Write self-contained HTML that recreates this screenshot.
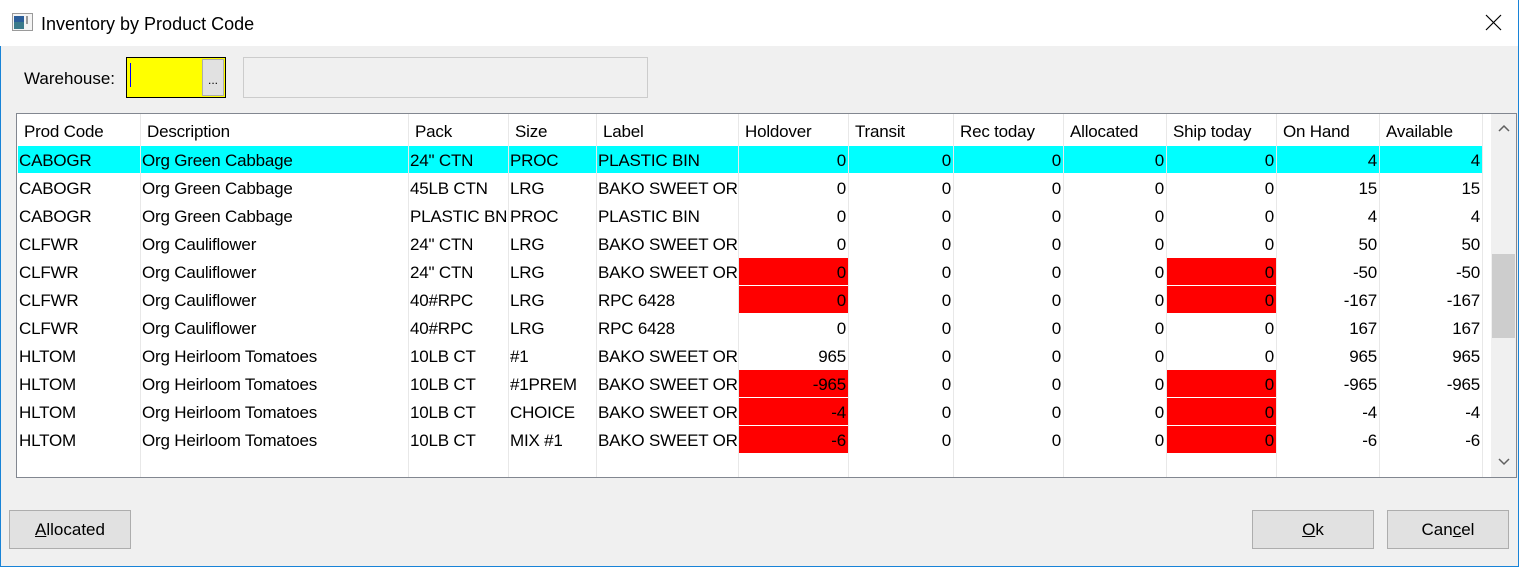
<!DOCTYPE html>
<html><head><meta charset="utf-8"><style>
*{box-sizing:border-box;margin:0;padding:0}
body{width:1519px;height:567px;overflow:hidden;font-family:"Liberation Sans",sans-serif;font-size:17px;color:#000;background:#f0f0f0;position:relative}
.win{position:absolute;left:0;top:0;width:1519px;height:567px;border:1px solid #1883d7;background:#f0f0f0}
.title{position:absolute;left:-1px;top:-1px;width:1518px;height:46px;background:#fff}
.title .t{position:absolute;left:41px;top:14px;font-size:18px}
.lbl{position:absolute;left:23px;top:68px;font-size:17px}
.wh{position:absolute;left:125px;top:56px;width:100px;height:41px;border:1px solid #000;background:#ff0}
.wh .btn{position:absolute;right:1px;top:1px;width:22px;height:37px;background:#e1e1e1;border:1px solid #adadad;font-size:12px;text-align:center;line-height:40px}
.wh .cur{position:absolute;left:3px;top:5px;width:1px;height:24px;background:#00f}
.box2{position:absolute;left:242px;top:56px;width:405px;height:41px;border:1px solid #ccc;background:#f0f0f0}
.grid{position:absolute;left:15px;top:112px;width:1501px;height:365px;border:1px solid #828790;background:#fff;overflow:hidden;letter-spacing:-0.2px}
.row{position:absolute;left:1px;height:28px}
.c{position:absolute;top:0;height:28px;border-right:1px solid #e8e8e8;white-space:nowrap;overflow:hidden;line-height:29px;padding-left:1px}
.n{text-align:right;padding-right:2px;padding-left:0}
.bg{position:absolute;left:0;top:0;right:0;height:27px}
.hd .c{height:32px;line-height:36px;padding-left:6px}
.sb{position:absolute;left:1474px;top:0;width:25px;height:363px;background:#f0f0f0}
.thumb{position:absolute;left:1px;top:140px;width:23px;height:84px;background:#cdcdcd}
.b{position:absolute;top:509px;height:39px;background:#e1e1e1;border:1px solid #adadad;text-align:center;line-height:38px;font-size:17px}
</style></head><body><div class="win">
<div class="title">
<svg style="position:absolute;left:12px;top:13px" width="21" height="19"><rect x="0.5" y="0.5" width="20" height="17" fill="#f4f4f4" stroke="#9a9a9a"/><rect x="2" y="3" width="10" height="13" fill="#3a7a8a"/><rect x="2" y="3" width="10" height="6" fill="#2b5e9a"/><rect x="14" y="3" width="2" height="8" fill="#999"/></svg>
<div class="t">Inventory by Product Code</div>
<svg style="position:absolute;left:1485px;top:14px" width="17" height="17"><path d="M1 1L16 16M16 1L1 16" stroke="#000" stroke-width="1.2"/></svg>
</div>
<div class="lbl">Warehouse:</div>
<div class="wh"><div class="cur"></div><div class="btn">...</div></div>
<div class="box2"></div>
<div class="grid">
<div class="row hd" style="top:0">
<div class="c" style="left:0;width:123px">Prod Code</div><div class="c" style="left:123px;width:268px">Description</div><div class="c" style="left:391px;width:100px">Pack</div><div class="c" style="left:491px;width:88px">Size</div><div class="c" style="left:579px;width:142px">Label</div><div class="c" style="left:721px;width:110px">Holdover</div><div class="c" style="left:831px;width:105px">Transit</div><div class="c" style="left:936px;width:110px">Rec today</div><div class="c" style="left:1046px;width:103px">Allocated</div><div class="c" style="left:1149px;width:110px">Ship today</div><div class="c" style="left:1259px;width:103px">On Hand</div><div class="c" style="left:1362px;width:103px">Available</div>
</div>
<div class="row" style="top:32px">
ROWS
</div>
<div class="sb"><svg style="position:absolute;left:7px;top:10px" width="12" height="8"><path d="M1 7L6 2L11 7" stroke="#606060" stroke-width="1.5" fill="none"/></svg><div class="thumb"></div><svg style="position:absolute;left:7px;top:344px" width="12" height="8"><path d="M1 1L6 6L11 1" stroke="#606060" stroke-width="1.5" fill="none"/></svg></div>
</div>
<div class="b" style="left:8px;width:122px"><u>A</u>llocated</div>
<div class="b" style="left:1251px;width:122px"><u>O</u>k</div>
<div class="b" style="left:1386px;width:122px">Can<u>c</u>el</div>
</div>
<script>
var L=[0,123,391,491,579,721,831,936,1046,1149,1259,1362,1465];
var D=[
["CABOGR","Org Green Cabbage",'24" CTN',"PROC","PLASTIC BIN","0","0","0","0","0","4","4","c"],
["CABOGR","Org Green Cabbage","45LB CTN","LRG","BAKO SWEET ORG","0","0","0","0","0","15","15",""],
["CABOGR","Org Green Cabbage","PLASTIC BN","PROC","PLASTIC BIN","0","0","0","0","0","4","4",""],
["CLFWR","Org Cauliflower",'24" CTN',"LRG","BAKO SWEET ORG","0","0","0","0","0","50","50",""],
["CLFWR","Org Cauliflower",'24" CTN',"LRG","BAKO SWEET ORG","0","0","0","0","0","-50","-50","r"],
["CLFWR","Org Cauliflower","40#RPC","LRG","RPC 6428","0","0","0","0","0","-167","-167","r"],
["CLFWR","Org Cauliflower","40#RPC","LRG","RPC 6428","0","0","0","0","0","167","167",""],
["HLTOM","Org Heirloom Tomatoes","10LB CT","#1","BAKO SWEET ORG","965","0","0","0","0","965","965",""],
["HLTOM","Org Heirloom Tomatoes","10LB CT","#1PREM","BAKO SWEET ORG","-965","0","0","0","0","-965","-965","r"],
["HLTOM","Org Heirloom Tomatoes","10LB CT","CHOICE","BAKO SWEET ORG","-4","0","0","0","0","-4","-4","r"],
["HLTOM","Org Heirloom Tomatoes","10LB CT","MIX #1","BAKO SWEET ORG","-6","0","0","0","0","-6","-6","r"],
["","","","","","","","","","","","",""]];
var h="";
D.forEach(function(r,i){h+='<div class="row" style="top:'+(32+i*28)+'px">';
for(var j=0;j<12;j++){var bg="";if(r[12]=="c")bg="#0ff";if(r[12]=="r"&&(j==5||j==9))bg="#f00";
h+='<div class="c'+(j>=5?' n':'')+'" style="left:'+L[j]+'px;width:'+(L[j+1]-L[j])+'px">'+(bg?'<div class="bg" style="background:'+bg+'"></div>':'')+'<span style="position:relative">'+r[j]+'</span></div>';}
h+='</div>';});
var rs=document.querySelectorAll('.row');rs[rs.length-1].outerHTML=h;
</script>
</body></html>
